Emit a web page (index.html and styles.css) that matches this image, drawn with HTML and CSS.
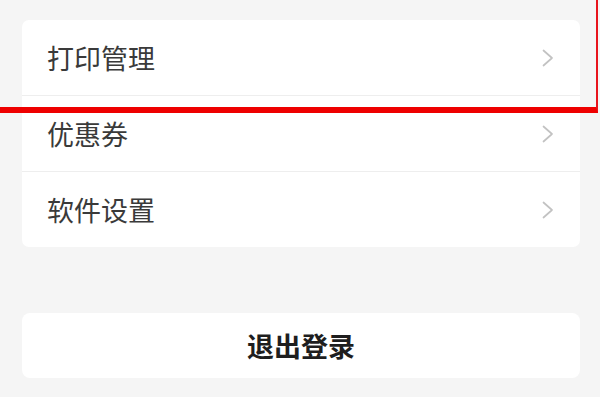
FILE: index.html
```html
<!DOCTYPE html>
<html lang="zh-CN">
<head>
    <meta charset="UTF-8">
    <meta name="viewport" content="width=device-width, initial-scale=1.0">
    <title>设置</title>
    <link rel="stylesheet" href="styles.css">
</head>
<body>
    <div class="page">
        <div class="menu-card">
            <div class="menu-item">
                <span class="menu-label">打印管理</span>
                <svg class="arrow" width="12" height="18" viewBox="0 0 12 18"><path d="M1.5 1.5 L10 9 L1.5 16.5" fill="none" stroke="#c2c2c2" stroke-width="1.7" stroke-linecap="round" stroke-linejoin="round"/></svg>
            </div>
            <div class="menu-item">
                <span class="menu-label">优惠券</span>
                <svg class="arrow" width="12" height="18" viewBox="0 0 12 18"><path d="M1.5 1.5 L10 9 L1.5 16.5" fill="none" stroke="#c2c2c2" stroke-width="1.7" stroke-linecap="round" stroke-linejoin="round"/></svg>
            </div>
            <div class="menu-item">
                <span class="menu-label">软件设置</span>
                <svg class="arrow" width="12" height="18" viewBox="0 0 12 18"><path d="M1.5 1.5 L10 9 L1.5 16.5" fill="none" stroke="#c2c2c2" stroke-width="1.7" stroke-linecap="round" stroke-linejoin="round"/></svg>
            </div>
        </div>

        <button class="logout-btn" type="button">退出登录</button>

        <div class="highlight"></div>
    </div>
</body>
</html>
```

FILE: styles.css
```css
body {
    margin: 0;
    background: #f5f5f5;
    font-family: "Noto Sans CJK SC", "Noto Sans", sans-serif;
    color: #333333;
}
.page {
    position: relative;
    padding: 20px 20px 0 22px;
    height: 397px;
    box-sizing: border-box;
    overflow: hidden;
}
.menu-card {
    background: #ffffff;
    border-radius: 7px;
}
.menu-item {
    display: flex;
    align-items: center;
    justify-content: space-between;
    height: 75px;
    padding: 0 26px 0 25px;
    border-bottom: 1px solid #eeeeee;
}
.menu-item:last-child {
    border-bottom: none;
}
.menu-label {
    font-size: 27px;
    line-height: 1;
    color: #3a3a3a;
}
.arrow {
    display: block;
}
.logout-btn {
    display: block;
    width: 100%;
    height: 65px;
    margin-top: 66px;
    background: #ffffff;
    border: none;
    border-radius: 8px;
    font-family: "Noto Sans CJK SC", "Noto Sans", sans-serif;
    font-size: 27px;
    font-weight: bold;
    color: #1e1e1e;
    padding: 0;
}
.highlight {
    position: absolute;
    left: -10px;
    top: -10px;
    width: 606px;
    height: 117px;
    border-right: 2px solid #e8141c;
    border-bottom: 6px solid #ee0000;
    pointer-events: none;
}
```
